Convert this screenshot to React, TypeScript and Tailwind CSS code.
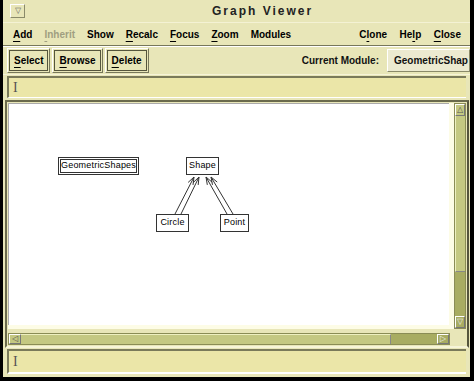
import React from "react";

const font = { fontFamily: '"Liberation Sans", Arial, Helvetica, sans-serif' };

function Mn({ text, at = 0, dim = false }: { text: string; at?: number; dim?: boolean }) {
  const a = text.slice(0, at);
  const b = text.slice(at, at + 1);
  const c = text.slice(at + 1);
  return (
    <span className={dim ? "text-[#a09e80]" : "text-black"}>
      {a}
      <span className="underline underline-offset-[3px] decoration-1">{b}</span>
      {c}
    </span>
  );
}

function Btn({ label }: { label: string }) {
  return (
    <div className="h-[25px] border border-t-white border-l-white border-r-[#77775a] border-b-[#77775a] p-[1px]">
      <div className="h-full border border-[#55553c] px-[4px] flex items-center">
        <Mn text={label} />
      </div>
    </div>
  );
}

function Node({ label, x, y, w, double = false }: { label: string; x: number; y: number; w: number; double?: boolean }) {
  return (
    <div
      className="absolute h-[18px] bg-white flex items-center justify-center text-[9px] font-normal tracking-[0.2px] text-black whitespace-nowrap"
      style={{ left: x, top: y, width: w, border: double ? "3px double #333" : "1px solid #333" }}
    >
      {label}
    </div>
  );
}

// a line with an open arrow head at its second end
function Edge({ x1, y1, x2, y2 }: { x1: number; y1: number; x2: number; y2: number }) {
  const ang = Math.atan2(y1 - y2, x1 - x2);
  const len = 8;
  const s = 0.35;
  const ax = x2 + len * Math.cos(ang - s);
  const ay = y2 + len * Math.sin(ang - s);
  const bx = x2 + len * Math.cos(ang + s);
  const by = y2 + len * Math.sin(ang + s);
  return (
    <g>
      <line x1={x1} y1={y1} x2={x2} y2={y2} />
      <polyline points={`${ax},${ay} ${x2},${y2} ${bx},${by}`} />
    </g>
  );
}

export default function App() {
  return (
    <div className="w-[474px] h-[381px] bg-black overflow-hidden" style={font}>
      <div className="h-[377px] ml-[3px] mr-[4px] bg-[#e8e6b8] flex flex-col text-[10px] font-bold">
        {/* title */}
        <div className="h-[23px] shrink-0 relative flex items-center border-b border-[#f4f2d4]">
          <div className="absolute left-[7px] top-[4px] w-[15px] h-[14px] border border-t-white border-l-white border-r-[#8a8a6a] border-b-[#8a8a6a] flex items-center justify-center text-[8px] text-[#666] font-normal">
            ▽
          </div>
          <div className="pl-[209px] text-[12px] tracking-[2px] text-[#222]">Graph Viewer</div>
        </div>

        {/* menu */}
        <div className="h-[22px] shrink-0 flex items-center pl-[10px] pr-[9px] text-black">
          <div className="flex gap-[12px]">
            <Mn text="Add" />
            <Mn text="Inherit" dim />
            <span>Show</span>
            <Mn text="Recalc" />
            <Mn text="Focus" />
            <Mn text="Zoom" />
            <span>Modules</span>
          </div>
          <div className="ml-auto flex gap-[12.5px]">
            <Mn text="Clone" at={1} />
            <Mn text="Help" at={2} />
            <Mn text="Close" />
          </div>
        </div>

        {/* button row */}
        <div className="h-[30px] shrink-0 border-t border-t-[#77775a] border-b border-b-[#f6f4d8] flex items-center pl-[4px] gap-[2px] shadow-[inset_0_1px_0_#fff]">
          <Btn label="Select" />
          <Btn label="Browse" />
          <Btn label="Delete" />
          <div className="ml-auto mr-[6px] text-[#111]">Current Module:</div>
          <div className="h-[23px] w-[83px] overflow-hidden whitespace-nowrap bg-[#ecead0] border border-t-white border-l-white border-[#8a8a6a] flex items-center pl-[6px] text-[#111]">
            GeometricShap
          </div>
        </div>

        {/* text input */}
        <div className="mx-[4px] mt-[1px] h-[22px] shrink-0 bg-[#ebe6a8] border-l-2 border-t-2 border-l-[#7a7a5a] border-t-[#7a7a5a] border-b border-b-white flex items-center pl-[4px]">
          <span className="text-[14px] font-normal text-[#555]" style={{ fontFamily: '"Liberation Serif", serif' }}>I</span>
        </div>

        {/* canvas frame */}
        <div className="ml-[2px] mr-[1px] mt-[2px] h-[248px] shrink-0 border-2 border-t-[#6a6a4c] border-l-[#6a6a4c] border-b-[#f6f4d8] border-r-[#55553c] flex flex-col p-[1px]">
          <div className="flex flex-1 min-h-0">
            <div className="flex-1 relative bg-white border-r-[5px] border-b-[4px] border-[#fdfce6] shadow-[inset_1px_1px_0_#aaa]">
              <svg className="absolute inset-0" width="446" height="226">
                <g stroke="#333" strokeWidth="1" fill="none">
                  <Edge x1={167} y1={111} x2={186} y2={74} />
                  <Edge x1={173} y1={111} x2={191} y2={74} />
                  <Edge x1={219} y1={111} x2={198} y2={74} />
                  <Edge x1={225} y1={111} x2={203} y2={74} />
                </g>
              </svg>
              <Node label="GeometricShapes" x={50} y={54} w={81} double />
              <Node label="Shape" x={178} y={54} w={33} />
              <Node label="Circle" x={148} y={111} w={33} />
              <Node label="Point" x={212} y={111} w={29} />
            </div>
            {/* vertical scrollbar */}
            <div className="w-[12px] bg-[#a8ac62] flex flex-col border border-[#8a8c55]">
              <div className="h-[12px] bg-[#c4c882] border border-t-white border-l-white border-[#777] flex items-center justify-center text-[8px] leading-none text-[#555] font-normal">△</div>
              <div className="h-[156px] bg-[#c4c882] border-l border-l-[#eef0c0] border-b border-b-[#888]" />
              <div className="flex-1" />
              <div className="h-[12px] bg-[#a8ac62] border border-t-white border-l-white border-[#777] flex items-center justify-center text-[8px] leading-none text-[#eee] font-normal">▽</div>
            </div>
          </div>
          {/* horizontal scrollbar */}
          <div className="h-[12px] mt-[4px] mr-[16px] shrink-0 bg-[#a8ac62] flex border border-[#8a8c55]">
            <div className="w-[12px] bg-[#c4c882] border border-t-white border-l-white border-[#777] flex items-center justify-center text-[8px] leading-none text-[#555] font-normal">◁</div>
            <div className="w-[370px] bg-[#c4c882] border-t border-t-[#eef0c0] border-r border-r-[#888]" />
            <div className="flex-1" />
            <div className="w-[12px] bg-[#a8ac62] border border-t-white border-l-white border-[#777] flex items-center justify-center text-[8px] leading-none text-[#eee] font-normal">▷</div>
          </div>
        </div>

        {/* bottom text */}
        <div className="mx-[4px] mt-[1px] h-[25px] shrink-0 bg-[#ebe6a8] border-l-2 border-t-2 border-l-[#7a7a5a] border-t-[#7a7a5a] border-b-2 border-b-white flex items-center pl-[4px]">
          <span className="text-[14px] font-normal text-[#555]" style={{ fontFamily: '"Liberation Serif", serif' }}>I</span>
        </div>
      </div>
    </div>
  );
}
